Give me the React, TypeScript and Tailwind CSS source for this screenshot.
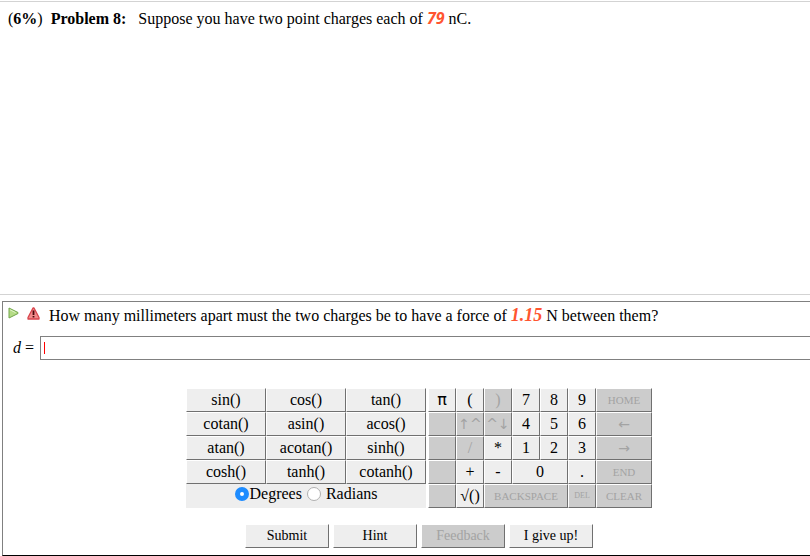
import React from "react";

type Key = {
  label: string;
  span?: number;
  disabled?: boolean;
  look?: "normal" | "small" | "tiny" | "symbol" | "arrow" | "power";
};

const functionRows: string[][] = [
  ["sin()", "cos()", "tan()"],
  ["cotan()", "asin()", "acos()"],
  ["atan()", "acotan()", "sinh()"],
  ["cosh()", "tanh()", "cotanh()"],
];

const keyRows: Key[][] = [
  [
    { label: "π", look: "symbol" },
    { label: "(" },
    { label: ")", disabled: true },
    { label: "7" },
    { label: "8" },
    { label: "9" },
    { label: "HOME", span: 2, disabled: true, look: "small" },
  ],
  [
    { label: "", disabled: true },
    { label: "↑^", disabled: true, look: "power" },
    { label: "^↓", disabled: true, look: "power" },
    { label: "4" },
    { label: "5" },
    { label: "6" },
    { label: "←", span: 2, disabled: true, look: "arrow" },
  ],
  [
    { label: "", disabled: true },
    { label: "/", disabled: true },
    { label: "*" },
    { label: "1" },
    { label: "2" },
    { label: "3" },
    { label: "→", span: 2, disabled: true, look: "arrow" },
  ],
  [
    { label: "", disabled: true },
    { label: "+" },
    { label: "-" },
    { label: "0", span: 2 },
    { label: "." },
    { label: "END", span: 2, disabled: true, look: "small" },
  ],
  [
    { label: "", disabled: true },
    { label: "√()" },
    { label: "BACKSPACE", span: 3, disabled: true, look: "small" },
    { label: "DEL", disabled: true, look: "tiny" },
    { label: "CLEAR", span: 2, disabled: true, look: "small" },
  ],
];

const actions = [
  { label: "Submit" },
  { label: "Hint" },
  { label: "Feedback", disabled: true },
  { label: "I give up!" },
];

const units = [
  { value: "degrees", label: "Degrees", gap: "gap-px" },
  { value: "radians", label: "Radians", gap: "gap-[5px]" },
];

const spans: Record<number, string> = {
  1: "col-span-1",
  2: "col-span-2",
  3: "col-span-3",
};

const looks = {
  normal: "text-base",
  small: "text-[11px]",
  tiny: "text-[8px]",
  symbol: "font-['DejaVu_Sans',sans-serif] text-base",
  arrow: "font-['DejaVu_Sans',sans-serif] text-sm",
  power: "font-['DejaVu_Sans',sans-serif] text-sm",
};

const edge = "border border-t-white border-l-white border-r-[#707070] border-b-[#707070]";

const PadKey = ({ item }: { item: Key }) => {
  const tone = item.disabled ? "bg-[#cccccc] text-[#a3a3a3]" : "bg-[#eeeeee] text-black";

  return (
    <button
      type="button"
      disabled={item.disabled}
      aria-label={item.label || "Unused key"}
      className={`flex h-6 items-center justify-center whitespace-nowrap ${edge} ${looks[item.look || "normal"]} ${tone} ${spans[item.span || 1]}`}
    >
      {item.label}
    </button>
  );
};

const PlayIcon = () => (
  <svg width="11" height="12" viewBox="0 0 11 12" aria-hidden="true">
    <path d="M1 1 L10 5.5 L10 6.5 L1 11 Z" fill="#b5dc86" stroke="#72a64a" strokeLinejoin="round" />
    <path d="M2 2.8 L7.5 5.6" stroke="#e0f3c8" />
  </svg>
);

const WarningIcon = () => (
  <svg width="13" height="13" viewBox="0 0 13 13" aria-hidden="true">
    <path
      d="M6 1 L7 1 L12 10.5 L12 12 L1 12 L1 10.5 Z"
      fill="#f08a8a"
      stroke="#d8434b"
      strokeWidth="1.3"
      strokeLinejoin="round"
    />
    <path d="M6.5 3.5 V8" stroke="#4a0508" strokeWidth="1.8" />
    <path d="M6.5 9 V10.5" stroke="#4a0508" strokeWidth="1.8" />
  </svg>
);

const App = () => {
  const [answer, setAnswer] = React.useState("");
  const [unit, setUnit] = React.useState("degrees");

  return (
    <main className="overflow-hidden bg-white pt-px font-['Liberation_Serif',serif] text-base text-black">
      <section className="h-[294px] border-y border-[#d3d3d3] px-2 pt-1">
        <p className="leading-6">
          (<b>6%</b>)<b className="ml-2">Problem 8:</b>
          <span className="ml-3">Suppose you have two point charges each of </span>
          <b className="font-['Open_Sans',sans-serif] leading-6 text-[#ff5530] italic">79</b> nC.
        </p>
      </section>

      <section className="mt-[6px] ml-[2px] border-t border-b border-l border-[#808080] border-b-black pb-[7px]">
        <div className="flex h-[26px] items-center pl-[5px]">
          <span className="mb-1">
            <PlayIcon />
          </span>
          <span className="mb-1 ml-2">
            <WarningIcon />
          </span>
          <p className="ml-[9px] leading-6">
            How many millimeters apart must the two charges be to have a force of{" "}
            <b className="text-lg leading-6 text-[#ff5530] italic">1.15</b> N between them?
          </p>
        </div>

        <div className="mt-2 flex items-center pl-[10px]">
          <label htmlFor="answer" className="w-[27px] whitespace-nowrap">
            <i>d</i> =
          </label>
          <div className="relative flex min-w-0 flex-1">
            <input
              id="answer"
              value={answer}
              onChange={(e) => setAnswer(e.target.value)}
              className="peer h-6 min-w-0 flex-1 border border-r-0 border-[#808080] px-[3px] caret-red-600 outline-none"
            />
            {answer === "" && (
              <span className="pointer-events-none absolute top-[6px] left-1 h-3 w-px bg-[#ff0000] peer-focus:hidden" />
            )}
          </div>
        </div>

        <div className="mt-7 flex justify-center gap-[2px] pl-[25px]">
          <div className="flex w-60 flex-col bg-[#eeeeee]">
            <div className="grid grid-cols-3">
              {functionRows.flat().map((name) => (
                <button key={name} type="button" className={`h-6 bg-[#eeeeee] leading-5 ${edge}`}>
                  {name}
                </button>
              ))}
            </div>
            <div className="flex h-5 items-center justify-center gap-[5px]">
              {units.map(({ value, label, gap }) => (
                <label key={value} className={`flex items-center leading-5 ${gap}`}>
                  <input
                    type="radio"
                    name="unit"
                    value={value}
                    checked={unit === value}
                    onChange={() => setUnit(value)}
                    className="h-[14px] w-[14px] appearance-none rounded-full border border-[#b0b0b0] bg-white checked:border-[5px] checked:border-[#1e8cff]"
                  />
                  {label}
                </label>
              ))}
            </div>
          </div>
          <div className="grid w-56 grid-cols-8">
            {keyRows.flat().map((item, i) => (
              <PadKey key={i} item={item} />
            ))}
          </div>
        </div>

        <div className="mt-4 flex justify-center gap-1 pl-[25px]">
          {actions.map(({ label, disabled }) => (
            <button
              key={label}
              type="button"
              disabled={disabled}
              className={`h-6 w-[84px] text-sm ${edge} ${disabled ? "bg-[#cccccc] text-[#a3a3a3]" : "bg-[#eeeeee]"}`}
            >
              {label}
            </button>
          ))}
        </div>
      </section>
    </main>
  );
};

export default App;
